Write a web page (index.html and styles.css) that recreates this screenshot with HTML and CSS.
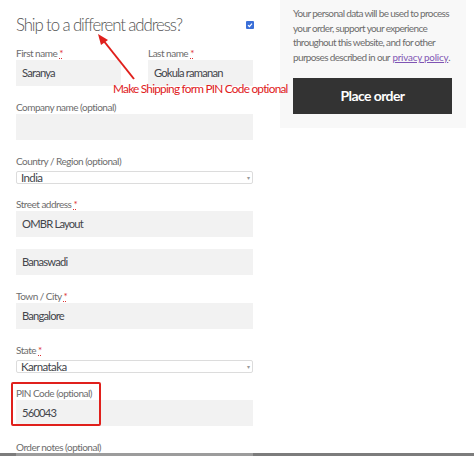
FILE: index.html
```html
<!DOCTYPE html>
<html>
<head>
<meta charset="utf-8">
<link rel="stylesheet" href="styles.css">
</head>
<body>
<div class="page">
  <div class="main">
    <div class="form-col">
      <div class="heading-row">
        <h3 class="heading">Ship to a different address?</h3>
        <span class="checkbox"><svg width="8" height="8" viewBox="0 0 8 8"><path d="M2 4.2 L3.4 5.6 L6 2.6" fill="none" stroke="#fff" stroke-width="1.2"/></svg></span>
      </div>
      <div class="name-row">
        <div class="field">
          <label class="label">First name <abbr class="req">*</abbr></label>
          <div class="input">Saranya</div>
        </div>
        <div class="field">
          <label class="label">Last name <abbr class="req">*</abbr></label>
          <div class="input">Gokula ramanan</div>
        </div>
      </div>
      <div class="field">
        <label class="label">Company name (optional)</label>
        <div class="input"></div>
      </div>
      <div class="field field-select">
        <label class="label">Country / Region (optional)</label>
        <div class="select"><span>India</span><span class="caret">▾</span></div>
      </div>
      <div class="field">
        <label class="label">Street address <abbr class="req">*</abbr></label>
        <div class="input">OMBR Layout</div>
        <div class="input input-second">Banaswadi</div>
      </div>
      <div class="field">
        <label class="label">Town / City <abbr class="req">*</abbr></label>
        <div class="input">Bangalore</div>
      </div>
      <div class="field field-select">
        <label class="label">State <abbr class="req">*</abbr></label>
        <div class="select"><span>Karnataka</span><span class="caret">▾</span></div>
      </div>
      <div class="field">
        <label class="label">PIN Code (optional)</label>
        <div class="input">560043</div>
      </div>
      <div class="field">
        <label class="label">Order notes (optional)</label>
      </div>
    </div>
    <div class="side-col">
      <div class="panel">
        <p class="privacy">Your personal data will be used to process your order, support your experience throughout this website, and for other purposes described in our<a class="link">privacy policy</a>.</p>
        <button class="place-order">Place order</button>
      </div>
    </div>

    <svg class="arrow" width="60" height="60" viewBox="0 0 60 60">
      <line x1="38" y1="46" x2="7" y2="7" stroke="#e0201c" stroke-width="2"/>
      <polygon points="2,1 12,7 5,12" fill="#e0201c"/>
    </svg>
    <div class="note">Make Shipping form PIN Code optional</div>
    <div class="highlight"></div>
  </div>
  <div class="bottom-bar"><div class="bar-field"></div></div>
</div>
</body>
</html>
```
FILE: styles.css
```css
html, body {
  margin: 0;
  padding: 0;
  background: #fff;
}
body {
  font-family: "Lato", "Noto Sans", sans-serif;
}
.page {
  width: 474px;
  height: 456px;
  display: flex;
  flex-direction: column;
  overflow: hidden;
}
.main {
  position: relative;
  flex: 1;
  display: flex;
  overflow: hidden;
}
.form-col {
  width: 237px;
  margin-left: 16px;
}
.heading-row {
  display: flex;
  align-items: center;
  justify-content: space-between;
  margin-top: 12px;
  height: 26px;
  margin-bottom: 8px;
}
.heading {
  margin: 0;
  font-weight: 300;
  font-size: 16.8px;
  letter-spacing: -1.1px;
  color: #555;
  line-height: 26px;
}
.checkbox {
  width: 8px;
  height: 8px;
  background: #3a6fd8;
  border-radius: 1px;
  display: flex;
  margin-right: -1px;
}
.name-row {
  display: grid;
  grid-template-columns: 105px 105px;
  column-gap: 27px;
}
.field {
  margin-bottom: 14px;
}
.field-select {
  margin-bottom: 13px;
}
.label {
  display: block;
  height: 14px;
  line-height: 14px;
  font-size: 10px;
  letter-spacing: -0.5px;
  color: #6d6d6d;
}
.field-select .label {
  margin-bottom: 3px;
}
.req {
  color: #d33;
  text-decoration: underline dotted;
  text-decoration-thickness: 1px;
  border: 0;
}
.input {
  height: 26px;
  background: #f2f2f2;
  box-sizing: border-box;
  padding-left: 6px;
  line-height: 26px;
  font-size: 11.2px;
  letter-spacing: -0.8px;
  color: #43454b;
}
.input-second {
  margin-top: 12px;
}
.select {
  height: 13px;
  box-sizing: border-box;
  border: 1px solid #dcdcdc;
  border-radius: 2px;
  background: #fff;
  display: flex;
  justify-content: space-between;
  align-items: center;
  padding: 0 3px 0 4px;
  font-size: 11.5px;
  letter-spacing: -0.6px;
  line-height: 11px;
  color: #43454b;
}
.caret {
  font-size: 6px;
  color: #999;
}
.side-col {
  margin-left: 27px;
}
.panel {
  width: 186px;
  box-sizing: border-box;
  background: #f8f8f8;
  padding: 6px 10px 14px 13px;
}
.privacy {
  margin: 0;
  font-size: 10px;
  letter-spacing: -0.65px;
  line-height: 14.7px;
  color: #6d6d6d;
}
.link {
  color: #7f54b3;
  text-decoration: underline;
  font-size: 9.8px;
  letter-spacing: -0.2px;
  margin-left: 2.6px;
}
.place-order {
  display: block;
  margin-top: 13px;
  width: 159px;
  height: 36px;
  border: 0;
  background: #333;
  color: #fff;
  font-family: inherit;
  font-weight: 700;
  font-size: 14px;
  letter-spacing: -0.6px;
}
.arrow {
  position: absolute;
  left: 96px;
  top: 33px;
}
.note {
  position: absolute;
  left: 113px;
  top: 81px;
  font-size: 11.8px;
  letter-spacing: -0.75px;
  color: #e0201c;
  white-space: nowrap;
}
.highlight {
  position: absolute;
  left: 11px;
  top: 382px;
  width: 90px;
  height: 44px;
  box-sizing: border-box;
  border: 2px solid #e0201c;
  border-radius: 2px;
}
.bottom-bar {
  height: 3px;
  background: #7c7c7c;
  position: relative;
}
.bar-field {
  margin-left: 16px;
  width: 237px;
  height: 3px;
  background: #9c9c9c;
}
```
